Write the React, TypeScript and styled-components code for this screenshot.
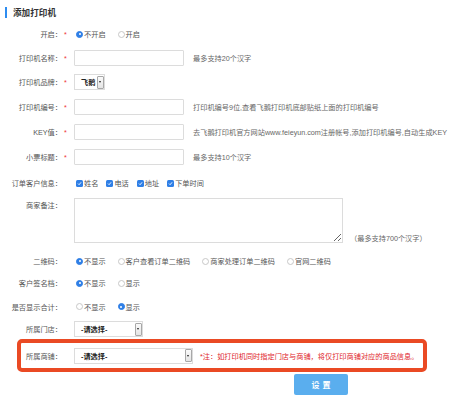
import styled, { createGlobalStyle } from 'styled-components';

const GlobalStyle = createGlobalStyle`
  html, body {
    margin: 0;
    padding: 0;
    background: #fff;
  }
  body {
    font-family: 'Liberation Sans', 'Noto Sans CJK SC', sans-serif;
    font-size: 7.2px;
    color: #555;
  }
`;

const Page = styled.div`
  width: 474px;
  height: 407px;
  overflow: hidden;
`;

const Header = styled.div`
  height: 22px;
  display: flex;
  align-items: center;
  padding-left: 5px;
  gap: 6px;
  padding-top: 2px;
  box-sizing: border-box;
`;

const HeaderBar = styled.span`
  width: 2px;
  height: 11px;
  background: #2d8cf0;
`;

const Title = styled.span`
  font-size: 8.6px;
  font-weight: bold;
  color: #333;
`;

const Row = styled.div<{ $h: number; $top?: boolean }>`
  height: ${(p) => p.$h}px;
  display: flex;
  align-items: ${(p) => (p.$top ? 'flex-start' : 'center')};
  box-sizing: border-box;
`;

const Label = styled.div<{ $w?: number; $top?: boolean }>`
  width: ${(p) => p.$w ?? 62}px;
  flex: none;
  text-align: right;
  color: #555;
  white-space: nowrap;
  margin-top: ${(p) => (p.$top ? '4px' : '0')};
`;

const Mark = styled.span<{ $top?: boolean }>`
  width: 12px;
  flex: none;
  padding-left: 2px;
  box-sizing: border-box;
  color: #e33;
  font-size: 7px;
  margin-top: ${(p) => (p.$top ? '4px' : '0')};
`;

const TextInput = styled.div`
  width: 110px;
  height: 16px;
  border: 1px solid #dcdcdc;
  border-radius: 1px;
  box-sizing: border-box;
  background: #fff;
  flex: none;
`;

const Hint = styled.span<{ $gap?: number; $color?: string }>`
  margin-left: ${(p) => p.$gap ?? 9}px;
  color: ${(p) => p.$color ?? '#666'};
  white-space: nowrap;
`;

const Choices = styled.div<{ $gap: number }>`
  display: flex;
  align-items: center;
  gap: ${(p) => p.$gap}px;
  margin-left: 2px;
`;

const Choice = styled.label`
  display: flex;
  align-items: center;
  gap: 1px;
  color: #555;
  white-space: nowrap;
`;

const RadioDot = styled.span<{ $on?: boolean }>`
  width: 7px;
  height: 7px;
  border-radius: 50%;
  box-sizing: border-box;
  border: 1px solid ${(p) => (p.$on ? '#2f7fe6' : '#c8c8c8')};
  background: ${(p) => (p.$on ? '#2f7fe6' : '#fff')};
  display: flex;
  align-items: center;
  justify-content: center;
  &::after {
    content: '';
    width: 2px;
    height: 2px;
    border-radius: 50%;
    background: ${(p) => (p.$on ? '#fff' : 'transparent')};
  }
`;

const CheckBox = styled.span`
  width: 7px;
  height: 7px;
  border-radius: 1.5px;
  background: #2f7fe6;
  display: flex;
  align-items: center;
  justify-content: center;
`;

const Select = styled.div<{ $w: number }>`
  width: ${(p) => p.$w}px;
  height: 16px;
  border: 1px solid #dcdcdc;
  box-sizing: border-box;
  display: flex;
  align-items: center;
  justify-content: space-between;
  background: #fff;
  flex: none;
  padding-left: 6px;
  color: #222;
  font-weight: bold;
`;

const SelectArrow = styled.span`
  width: 7px;
  height: 13px;
  margin-right: 0.5px;
  border: 1px solid #a8a8a8;
  border-radius: 1px;
  box-sizing: border-box;
  background: linear-gradient(#fafafa, #e4e4e4);
  display: flex;
  align-items: center;
  justify-content: center;
  &::after {
    content: '';
    border-left: 1.5px solid transparent;
    border-right: 1.5px solid transparent;
    border-top: 2px solid #222;
  }
`;

const Memo = styled.textarea`
  width: 269px;
  height: 45px;
  margin: 2px 0 0;
  border: 1px solid #dcdcdc;
  box-sizing: border-box;
  resize: both;
  flex: none;
  outline: none;
`;

const MemoHint = styled.span`
  align-self: flex-start;
  margin-top: 37px;
  margin-left: 7px;
  color: #666;
  white-space: nowrap;
`;

const Highlight = styled.div`
  margin-left: 17px;
  width: 410px;
  height: 33px;
  border: 4px solid #ea4a24;
  border-radius: 5px;
  box-sizing: border-box;
`;

const Actions = styled.div`
  padding-left: 294px;
  padding-top: 2px;
`;

const SubmitButton = styled.button`
  width: 54px;
  height: 21px;
  border: none;
  border-radius: 2px;
  background: #5aaeee;
  color: #fff;
  font-family: 'Liberation Sans', 'Noto Sans CJK SC', sans-serif;
  font-size: 8px;
  font-weight: bold;
  letter-spacing: 3px;
  padding: 0 0 0 3px;
  cursor: pointer;
`;

function Radio({ on, text }: { on?: boolean; text: string }) {
  return (
    <Choice>
      <RadioDot $on={on} />
      {text}
    </Choice>
  );
}

function Check({ text }: { text: string }) {
  return (
    <Choice>
      <CheckBox>
        <svg width="5" height="5" viewBox="0 0 10 10">
          <path d="M2 5.2 L4.2 7.4 L8.2 2.6" fill="none" stroke="#fff" strokeWidth="1.8" />
        </svg>
      </CheckBox>
      {text}
    </Choice>
  );
}

function Dropdown({ w, text }: { w: number; text: string }) {
  return (
    <Select $w={w}>
      <span>{text}</span>
      <SelectArrow />
    </Select>
  );
}

export default function App() {
  return (
    <Page>
      <GlobalStyle />
      <Header>
        <HeaderBar />
        <Title>添加打印机</Title>
      </Header>

      <Row $h={24}>
        <Label>开启：</Label>
        <Mark>*</Mark>
        <Choices $gap={12}>
          <Radio on text="不开启" />
          <Radio text="开启" />
        </Choices>
      </Row>

      <Row $h={24}>
        <Label>打印机名称：</Label>
        <Mark>*</Mark>
        <TextInput />
        <Hint>最多支持20个汉字</Hint>
      </Row>

      <Row $h={24}>
        <Label>打印机品牌：</Label>
        <Mark>*</Mark>
        <Dropdown w={31} text="飞鹅" />
      </Row>

      <Row $h={26}>
        <Label>打印机编号：</Label>
        <Mark>*</Mark>
        <TextInput />
        <Hint>打印机编号9位,查看飞鹅打印机底部贴纸上面的打印机编号</Hint>
      </Row>

      <Row $h={24}>
        <Label>KEY值：</Label>
        <Mark>*</Mark>
        <TextInput />
        <Hint>去飞鹅打印机官方网站www.feieyun.com注册帐号,添加打印机编号,自动生成KEY</Hint>
      </Row>

      <Row $h={26}>
        <Label>小票标题：</Label>
        <Mark>*</Mark>
        <TextInput />
        <Hint>最多支持10个汉字</Hint>
      </Row>

      <Row $h={26}>
        <Label>订单客户信息：</Label>
        <Mark />
        <Choices $gap={8}>
          <Check text="姓名" />
          <Check text="电话" />
          <Check text="地址" />
          <Check text="下单时间" />
        </Choices>
      </Row>

      <Row $h={54} $top>
        <Label $top>商家备注：</Label>
        <Mark $top />
        <Memo />
        <MemoHint>（最多支持700个汉字）</MemoHint>
      </Row>

      <Row $h={22}>
        <Label>二维码：</Label>
        <Mark />
        <Choices $gap={12}>
          <Radio on text="不显示" />
          <Radio text="客户查看订单二维码" />
          <Radio text="商家处理订单二维码" />
          <Radio text="官网二维码" />
        </Choices>
      </Row>

      <Row $h={22}>
        <Label>客户签名档：</Label>
        <Mark />
        <Choices $gap={12}>
          <Radio on text="不显示" />
          <Radio text="显示" />
        </Choices>
      </Row>

      <Row $h={25}>
        <Label>是否显示合计：</Label>
        <Mark />
        <Choices $gap={12}>
          <Radio text="不显示" />
          <Radio on text="显示" />
        </Choices>
      </Row>

      <Row $h={20}>
        <Label>所属门店：</Label>
        <Mark />
        <Dropdown w={69} text="-请选择-" />
      </Row>

      <Highlight>
        <Row $h={25}>
          <Label $w={41}>所属商铺：</Label>
          <Mark />
          <Dropdown w={119} text="-请选择-" />
          <Hint $gap={7} $color="#e0242a">*注：如打印机同时指定门店与商铺，将仅打印商铺对应的商品信息。</Hint>
        </Row>
      </Highlight>

      <Actions>
        <SubmitButton type="button">设置</SubmitButton>
      </Actions>
    </Page>
  );
}
